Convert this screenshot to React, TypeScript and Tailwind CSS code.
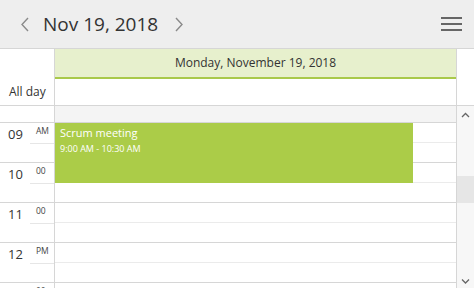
import React from 'react';

const hours = [
  { h: '09', m: 'AM' },
  { h: '10', m: '00' },
  { h: '11', m: '00' },
  { h: '12', m: 'PM' },
  { h: '01', m: '00' },
];

function Chevron({ dir }: { dir: 'left' | 'right' | 'up' | 'down' }) {
  const d = {
    left: 'M8 1 L2 7.5 L8 14',
    right: 'M2 1 L8 7.5 L2 14',
    up: 'M1 5 L4.5 1.5 L8 5',
    down: 'M1 1.5 L4.5 5 L8 1.5',
  }[dir];
  const small = dir === 'up' || dir === 'down';
  return (
    <svg width={small ? 9 : 10} height={small ? 7 : 15} viewBox={small ? '0 0 9 7' : '0 0 10 15'} fill="none">
      <path d={d} stroke={small ? '#666' : '#8a8a8a'} strokeWidth={small ? 1.3 : 1.4} />
    </svg>
  );
}

export default function App() {
  return (
    <div
      className="w-[474px] h-[288px] overflow-hidden bg-white text-[#333]"
      style={{ fontFamily: '"Open Sans", "Noto Sans", sans-serif' }}
    >
      {/* Toolbar */}
      <div className="h-[49px] bg-[#eeeeee] border-b border-[#d6d6d6] flex items-center pl-[20px] pr-[12px]">
        <Chevron dir="left" />
        <span className="ml-[13px] text-[19px] leading-none text-[#333]">Nov 19, 2018</span>
        <span className="ml-[16px]"><Chevron dir="right" /></span>
        <div className="flex-1" />
        <div className="flex flex-col gap-[4px] w-[21px]">
          <div className="h-[2px] bg-[#666]" />
          <div className="h-[2px] bg-[#666]" />
          <div className="h-[2px] bg-[#666]" />
        </div>
      </div>

      {/* Day header */}
      <div className="flex h-[30px]">
        <div className="w-[55px] border-r border-[#d6d6d6]" />
        <div className="w-[401px] bg-[#e7f0cd] border-b-2 border-[#a9c94a] flex items-center justify-center text-[12px]">
          Monday, November 19, 2018
        </div>
        <div className="flex-1 border-l border-[#d6d6d6]" />
      </div>

      {/* All day */}
      <div className="flex h-[27px] border-b border-[#d6d6d6]">
        <div className="w-[55px] border-r border-[#d6d6d6] flex items-center pl-[9px] text-[12px]">All day</div>
        <div className="w-[401px]" />
        <div className="flex-1 border-l border-[#d6d6d6]" />
      </div>

      {/* Body */}
      <div className="flex h-[182px]">
        <div className="w-[456px] overflow-hidden">
          <div className="flex h-[17px] border-b border-[#d6d6d6]">
            <div className="w-[55px] border-r border-[#d6d6d6]" />
            <div className="flex-1 bg-[#f4f4f4]" />
          </div>
          <div className="flex relative">
            {/* time column */}
            <div className="w-[55px] border-r border-[#d6d6d6] shrink-0">
              {hours.map((r) => (
                <div key={r.h} className="h-[40px] border-b border-[#d6d6d6] flex flex-col">
                  <div className="h-[20px] flex">
                    <span className="w-[36px] pl-[8px] pt-[3px] text-[13px] leading-[16px]">{r.h}</span>
                    <span className="pt-[3px] text-[8.5px] leading-[10px] text-[#444]">{r.m}</span>
                  </div>
                  <div className="ml-[30px] border-b border-[#e6e6e6]" />
                </div>
              ))}
            </div>
            {/* content column */}
            <div className="flex-1 relative">
              {hours.map((r) => (
                <div key={r.h} className="h-[40px] border-b border-[#d6d6d6] flex flex-col">
                  <div className="h-[20px] border-b border-[#ebebeb]" />
                </div>
              ))}
              <div className="absolute left-0 top-0 w-[358px] h-[60px] bg-[#abcc48] text-white px-[5px] pt-[3px]">
                <div className="text-[11px] leading-[14px]">Scrum meeting</div>
                <div className="text-[9px] leading-[12px] mt-[3px]">9:00 AM - 10:30 AM</div>
              </div>
            </div>
          </div>
        </div>
        {/* scrollbar */}
        <div className="flex-1 border-l border-[#d6d6d6] bg-[#f7f7f7] flex flex-col items-center">
          <div className="h-[16px] flex items-center justify-center pt-[2px]"><Chevron dir="up" /></div>
          <div className="h-[54px]" />
          <div className="w-full h-[27px] bg-[#e6e6e6]" />
          <div className="flex-1" />
          <div className="h-[14px] flex items-center justify-center"><Chevron dir="down" /></div>
        </div>
      </div>
    </div>
  );
}
